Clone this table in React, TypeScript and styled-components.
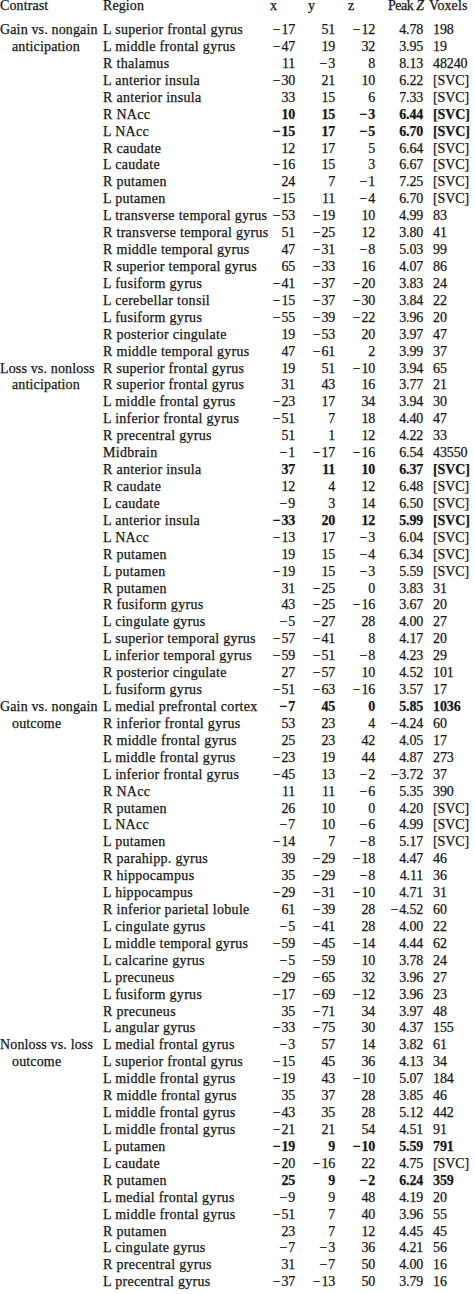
import React from "react";
import styled, { createGlobalStyle } from "styled-components";

const Global = createGlobalStyle`
  html, body { margin: 0; padding: 0; background: #ffffff; overflow: hidden; }
  body {
    font-family: "Liberation Serif", "Times New Roman", serif;
    color: #161616;
    -webkit-text-stroke: 0.25px #161616;
  }
`;

const ROW = 16.93;

const Table = styled.div`
  display: grid;
  grid-template-columns: 103px 154px 38px 40px 40px 48px 1fr;
  grid-template-rows: 22.1px;
  grid-auto-rows: ${ROW}px;
  font-size: 14px;
  line-height: ${ROW}px;
  width: 474px;
`;

const HeadCell = styled.div<{ $pad?: number; $tight?: boolean }>`
  line-height: 12.5px;
  white-space: nowrap;
  padding-left: ${(p) => p.$pad ?? 0}px;
  letter-spacing: ${(p) => (p.$tight ? "-0.5px" : "0.1px")};
  text-align: left;
`;

const GroupLabel = styled.div<{ $rows: number }>`
  grid-column: 1;
  grid-row: span ${(p) => p.$rows};
  white-space: nowrap;
  letter-spacing: 0.15px;
`;

const LabelLine = styled.div<{ $indent?: boolean }>`
  padding-left: ${(p) => (p.$indent ? 12 : 0)}px;
`;

const RegionCell = styled.div`
  white-space: nowrap;
  letter-spacing: 0.3px;
`;

const NumCell = styled.div<{ $bold?: boolean }>`
  white-space: nowrap;
  text-align: right;
  letter-spacing: -0.2px;
  font-weight: ${(p) => (p.$bold ? 700 : 400)};
`;

const VoxCell = styled.div<{ $bold?: boolean }>`
  white-space: nowrap;
  padding-left: 10px;
  letter-spacing: -0.1px;
  font-weight: ${(p) => (p.$bold ? 700 : 400)};
`;

type Row = [string, number, number, number, string, string, boolean?];

interface Group {
  label: [string, string];
  rows: Row[];
}

const groups: Group[] = [
  {
    label: ["Gain vs. nongain", "anticipation"],
    rows: [
      ["L superior frontal gyrus", -17, 51, -12, "4.78", "198"],
      ["L middle frontal gyrus", -47, 19, 32, "3.95", "19"],
      ["R thalamus", 11, -3, 8, "8.13", "48240"],
      ["L anterior insula", -30, 21, 10, "6.22", "[SVC]"],
      ["R anterior insula", 33, 15, 6, "7.33", "[SVC]"],
      ["R NAcc", 10, 15, -3, "6.44", "[SVC]", true],
      ["L NAcc", -15, 17, -5, "6.70", "[SVC]", true],
      ["R caudate", 12, 17, 5, "6.64", "[SVC]"],
      ["L caudate", -16, 15, 3, "6.67", "[SVC]"],
      ["R putamen", 24, 7, -1, "7.25", "[SVC]"],
      ["L putamen", -15, 11, -4, "6.70", "[SVC]"],
      ["L transverse temporal gyrus", -53, -19, 10, "4.99", "83"],
      ["R transverse temporal gyrus", 51, -25, 12, "3.80", "41"],
      ["R middle temporal gyrus", 47, -31, -8, "5.03", "99"],
      ["R superior temporal gyrus", 65, -33, 16, "4.07", "86"],
      ["L fusiform gyrus", -41, -37, -20, "3.83", "24"],
      ["L cerebellar tonsil", -15, -37, -30, "3.84", "22"],
      ["L fusiform gyrus", -55, -39, -22, "3.96", "20"],
      ["R posterior cingulate", 19, -53, 20, "3.97", "47"],
      ["R middle temporal gyrus", 47, -61, 2, "3.99", "37"],
    ],
  },
  {
    label: ["Loss vs. nonloss", "anticipation"],
    rows: [
      ["R superior frontal gyrus", 19, 51, -10, "3.94", "65"],
      ["R superior frontal gyrus", 31, 43, 16, "3.77", "21"],
      ["L middle frontal gyrus", -23, 17, 34, "3.94", "30"],
      ["L inferior frontal gyrus", -51, 7, 18, "4.40", "47"],
      ["R precentral gyrus", 51, 1, 12, "4.22", "33"],
      ["Midbrain", -1, -17, -16, "6.54", "43550"],
      ["R anterior insula", 37, 11, 10, "6.37", "[SVC]", true],
      ["R caudate", 12, 4, 12, "6.48", "[SVC]"],
      ["L caudate", -9, 3, 14, "6.50", "[SVC]"],
      ["L anterior insula", -33, 20, 12, "5.99", "[SVC]", true],
      ["L NAcc", -13, 17, -3, "6.04", "[SVC]"],
      ["R putamen", 19, 15, -4, "6.34", "[SVC]"],
      ["L putamen", -19, 15, -3, "5.59", "[SVC]"],
      ["R putamen", 31, -25, 0, "3.83", "31"],
      ["R fusiform gyrus", 43, -25, -16, "3.67", "20"],
      ["L cingulate gyrus", -5, -27, 28, "4.00", "27"],
      ["L superior temporal gyrus", -57, -41, 8, "4.17", "20"],
      ["L inferior temporal gyrus", -59, -51, -8, "4.23", "29"],
      ["R posterior cingulate", 27, -57, 10, "4.52", "101"],
      ["L fusiform gyrus", -51, -63, -16, "3.57", "17"],
    ],
  },
  {
    label: ["Gain vs. nongain", "outcome"],
    rows: [
      ["L medial prefrontal cortex", -7, 45, 0, "5.85", "1036", true],
      ["R inferior frontal gyrus", 53, 23, 4, "-4.24", "60"],
      ["R middle frontal gyrus", 25, 23, 42, "4.05", "17"],
      ["L middle frontal gyrus", -23, 19, 44, "4.87", "273"],
      ["L inferior frontal gyrus", -45, 13, -2, "-3.72", "37"],
      ["R NAcc", 11, 11, -6, "5.35", "390"],
      ["R putamen", 26, 10, 0, "4.20", "[SVC]"],
      ["L NAcc", -7, 10, -6, "4.99", "[SVC]"],
      ["L putamen", -14, 7, -8, "5.17", "[SVC]"],
      ["R parahipp. gyrus", 39, -29, -18, "4.47", "46"],
      ["R hippocampus", 35, -29, -8, "4.11", "36"],
      ["L hippocampus", -29, -31, -10, "4.71", "31"],
      ["R inferior parietal lobule", 61, -39, 28, "-4.52", "60"],
      ["L cingulate gyrus", -5, -41, 28, "4.00", "22"],
      ["L middle temporal gyrus", -59, -45, -14, "4.44", "62"],
      ["L calcarine gyrus", -5, -59, 10, "3.78", "24"],
      ["L precuneus", -29, -65, 32, "3.96", "27"],
      ["L fusiform gyrus", -17, -69, -12, "3.96", "23"],
      ["R precuneus", 35, -71, 34, "3.97", "48"],
      ["L angular gyrus", -33, -75, 30, "4.37", "155"],
    ],
  },
  {
    label: ["Nonloss vs. loss", "outcome"],
    rows: [
      ["L medial frontal gyrus", -3, 57, 14, "3.82", "61"],
      ["L superior frontal gyrus", -15, 45, 36, "4.13", "34"],
      ["L middle frontal gyrus", -19, 43, -10, "5.07", "184"],
      ["R middle frontal gyrus", 35, 37, 28, "3.85", "46"],
      ["L middle frontal gyrus", -43, 35, 28, "5.12", "442"],
      ["L middle frontal gyrus", -21, 21, 54, "4.51", "91"],
      ["L putamen", -19, 9, -10, "5.59", "791", true],
      ["L caudate", -20, -16, 22, "4.75", "[SVC]"],
      ["R putamen", 25, 9, -2, "6.24", "359", true],
      ["L medial frontal gyrus", -9, 9, 48, "4.19", "20"],
      ["L middle frontal gyrus", -51, 7, 40, "3.96", "55"],
      ["R putamen", 23, 7, 12, "4.45", "45"],
      ["L cingulate gyrus", -7, -3, 36, "4.21", "56"],
      ["R precentral gyrus", 31, -7, 50, "4.00", "16"],
      ["L precentral gyrus", -37, -13, 50, "3.79", "16"],
    ],
  },
];

const fmt = (v: number | string): string => {
  const s = String(v);
  return s.startsWith("-") ? "\u2212\u200A" + s.slice(1) : s;
};

export default function App() {
  return (
    <>
      <Global />
      <Table>
        <HeadCell>Contrast</HeadCell>
        <HeadCell>Region</HeadCell>
        <HeadCell $pad={13}>x</HeadCell>
        <HeadCell $pad={13}>y</HeadCell>
        <HeadCell $pad={13}>z</HeadCell>
        <HeadCell $pad={13} $tight>
          Peak <i>Z</i>
        </HeadCell>
        <HeadCell $pad={6}>Voxels</HeadCell>
        {groups.map((g, gi) => (
          <React.Fragment key={gi}>
            <GroupLabel $rows={g.rows.length}>
              <LabelLine>{g.label[0]}</LabelLine>
              <LabelLine $indent>{g.label[1]}</LabelLine>
            </GroupLabel>
            {g.rows.map((r, ri) => (
              <React.Fragment key={ri}>
                <RegionCell>{r[0]}</RegionCell>
                <NumCell $bold={r[6]}>{fmt(r[1])}</NumCell>
                <NumCell $bold={r[6]}>{fmt(r[2])}</NumCell>
                <NumCell $bold={r[6]}>{fmt(r[3])}</NumCell>
                <NumCell $bold={r[6]}>{fmt(r[4])}</NumCell>
                <VoxCell $bold={r[6]}>{r[5]}</VoxCell>
              </React.Fragment>
            ))}
          </React.Fragment>
        ))}
      </Table>
    </>
  );
}
